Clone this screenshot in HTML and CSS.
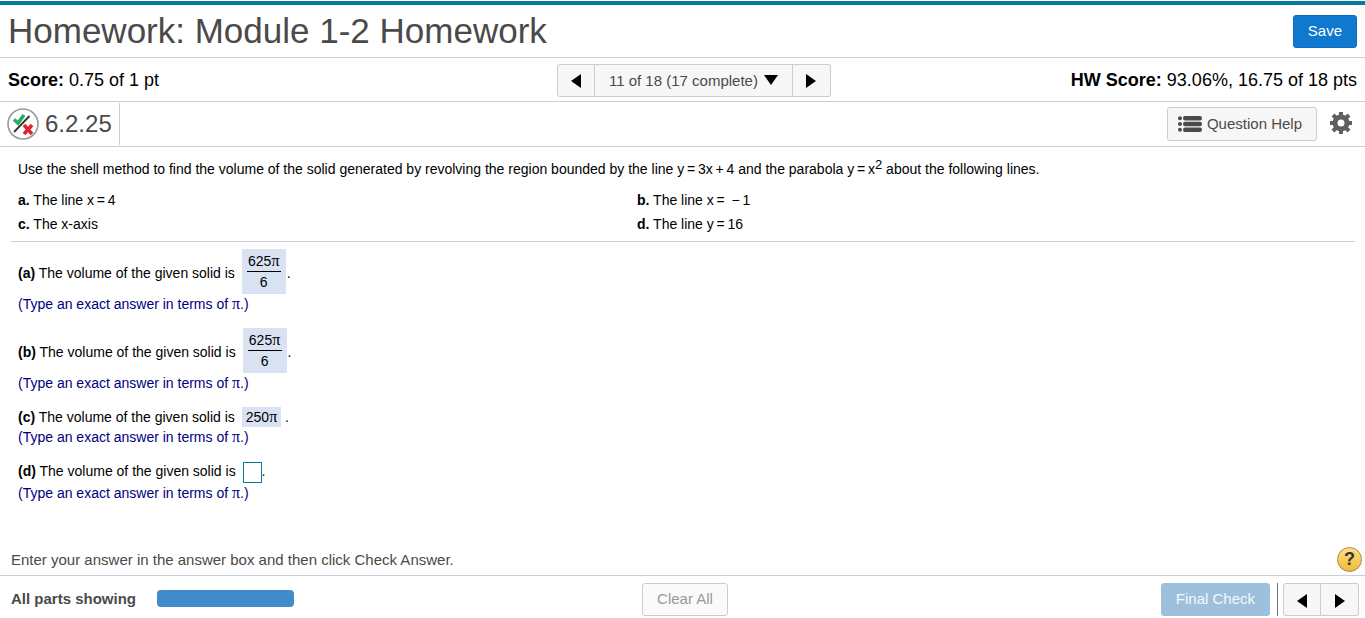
FILE: index.html
```html
<!DOCTYPE html>
<html lang="en">
<head>
    <meta charset="UTF-8">
    <meta name="viewport" content="width=device-width, initial-scale=1.0">
    <title>Homework: Module 1-2 Homework</title>
    <link rel="stylesheet" href="styles.css">
</head>
<body>
    <header class="title-bar">
        <h1>Homework: Module 1-2 Homework</h1>
        <button class="btn btn-primary" type="button">Save</button>
    </header>

    <div class="score-bar">
        <div><b>Score:</b> 0.75 of 1 pt</div>
        <div class="btn-group">
            <button class="btn arrow" type="button" aria-label="Previous question">
                <svg width="10" height="14" viewBox="0 0 10 14"><path d="M10 0v14L0 7z"/></svg>
            </button>
            <button class="btn picker" type="button">11 of 18 (17 complete)
                <svg width="14" height="10" viewBox="0 0 14 10"><path d="M0 0h14L7 10z"/></svg>
            </button>
            <button class="btn arrow" type="button" aria-label="Next question">
                <svg width="10" height="14" viewBox="0 0 10 14"><path d="M0 0v14l10-7z"/></svg>
            </button>
        </div>
        <div class="hw-score"><b>HW Score:</b> 93.06%, 16.75 of 18 pts</div>
    </div>

    <div class="question-bar">
        <div class="question-id">
            <svg width="32" height="32" viewBox="0 0 32 32" fill="none">
                <circle cx="16" cy="16" r="15" fill="#fff" stroke="#999" stroke-width="1.6"/>
                <path d="M7 11.5l4 3.500L17 7" stroke="#27ae5f" stroke-width="3.6"/>
                <path d="M7 24L22.500 8" stroke="#333" stroke-width="1.8"/>
                <path d="M17 17l8 9M25 17l-8 9" stroke="#e0242b" stroke-width="3.6"/>
            </svg>
            <h2>6.2.25</h2>
        </div>
        <div class="tools">
            <button class="btn help-btn" type="button">
                <svg width="24" height="16" viewBox="0 0 24 16" fill="#4a4a4a">
                    <path d="M7 0h15q2 0 2 2.2t-2 2.2H7q-2 0-2-2.2T7 0zM7 5.8h15q2 0 2 2.2t-2 2.2H7q-2 0-2-2.2t2-2.2zM7 11.6h15q2 0 2 2.2t-2 2.2H7q-2 0-2-2.2t2-2.2z"/>
                    <circle cx="2" cy="2.2" r="2"/><circle cx="2" cy="8" r="2"/><circle cx="2" cy="13.8" r="2"/>
                </svg>
                Question Help
            </button>
            <button class="gear" type="button" aria-label="Settings">
                <svg width="22" height="22" viewBox="-11 -11 22 22">
                    <circle r="6" fill="none" stroke="#5f5f5f" stroke-width="5"/>
                    <path d="M0-7v-4M0 7v4M-7 0h-4M7 0h4M5-5l3-3M-5-5l-3-3M5 5l3 3M-5 5l-3 3" stroke="#5f5f5f" stroke-width="4"/>
                </svg>
            </button>
        </div>
    </div>

    <main>
        <section class="problem">
            <p>Use the shell method to find the volume of the solid generated by revolving the region bounded by the line y&thinsp;=&thinsp;3x&thinsp;+&thinsp;4 and the parabola y&thinsp;=&thinsp;x<sup>2</sup> about the following lines.</p>
            <div class="lines">
                <div><b>a.</b> The line x&thinsp;=&thinsp;4</div>
                <div><b>b.</b> The line x&thinsp;=&thinsp; &minus;&thinsp;1</div>
                <div><b>c.</b> The x-axis</div>
                <div><b>d.</b> The line y&thinsp;=&thinsp;16</div>
            </div>
        </section>

        <section class="parts">
            <div class="part">
                <div><b>(a)</b> The volume of the given solid is
                    <span class="answer fraction"><span>625<i>π</i></span><span>6</span></span>.</div>
                <p class="hint">(Type an exact answer in terms of <i>π</i>.)</p>
            </div>
            <div class="part">
                <div><b>(b)</b> The volume of the given solid is
                    <span class="answer fraction"><span>625<i>π</i></span><span>6</span></span>.</div>
                <p class="hint">(Type an exact answer in terms of <i>π</i>.)</p>
            </div>
            <div class="part">
                <div><b>(c)</b> The volume of the given solid is
                    <span class="answer">250<i>π</i></span> .</div>
                <p class="hint">(Type an exact answer in terms of <i>π</i>.)</p>
            </div>
            <div class="part">
                <div><label for="answer-d"><b>(d)</b> The volume of the given solid is</label>
                    <input id="answer-d" type="text">.</div>
                <p class="hint">(Type an exact answer in terms of <i>π</i>.)</p>
            </div>
        </section>
    </main>

    <div class="instruction">
        <p>Enter your answer in the answer box and then click Check Answer.</p>
        <button class="help-icon" type="button" aria-label="Help">?</button>
    </div>

    <footer>
        <div class="progress-wrap">
            <b id="parts-label">All parts showing</b>
            <div class="progress" role="progressbar" aria-labelledby="parts-label"></div>
        </div>
        <button class="btn" type="button" disabled>Clear All</button>
        <div class="footer-actions">
            <button class="btn btn-check" type="button" disabled>Final Check</button>
            <div class="btn-group">
                <button class="btn arrow" type="button" aria-label="Previous">
                    <svg width="10" height="14" viewBox="0 0 10 14"><path d="M10 0v14L0 7z"/></svg>
                </button>
                <button class="btn arrow" type="button" aria-label="Next">
                    <svg width="10" height="14" viewBox="0 0 10 14"><path d="M0 0v14l10-7z"/></svg>
                </button>
            </div>
        </div>
    </footer>
</body>
</html>
```
FILE: styles.css
```css
* {
    box-sizing: border-box;
}

body {
    display: flex;
    flex-direction: column;
    min-height: 100vh;
    margin: 0;
    padding-top: 1px;
    background: #fff;
    color: #000;
    font-family: "Liberation Sans", Arial, sans-serif;
    font-size: 14px;
}

h1, h2, p {
    margin: 0;
    font-weight: normal;
}

.title-bar {
    display: flex;
    justify-content: space-between;
    align-items: center;
    height: 57px;
    padding: 0 8px;
    border-top: 4px solid #047a9c;
    border-bottom: 1px solid #c8cedb;
}

h1 {
    color: #4a4a4a;
    font-size: 35px;
    line-height: 44px;
}

.btn {
    height: 33px;
    padding: 0 14px 2px;
    border: 1px solid #ccc;
    border-radius: 3px;
    background: #f7f7f7;
    color: #4a4a4a;
    font-family: inherit;
    font-size: 15px;
}

.btn:disabled {
    background: #fafafa;
    color: #999;
}

.btn-primary {
    border-color: #0d6abf;
    background: #0f79d0;
    color: #fff;
}

.score-bar {
    display: grid;
    grid-template-columns: 24fr auto 23fr;
    align-items: center;
    height: 44px;
    padding: 1px 8px 0;
    border-bottom: 1px solid #c8cedb;
    font-size: 18px;
}

.hw-score {
    text-align: right;
}

.btn-group {
    display: flex;
}

.btn-group .btn {
    border-radius: 0;
}

.btn-group .btn + .btn {
    border-left: 0;
}

.btn-group .btn:first-child {
    border-radius: 3px 0 0 3px;
}

.btn-group .btn:last-child {
    border-radius: 0 3px 3px 0;
}

.arrow {
    display: flex;
    justify-content: center;
    align-items: center;
    width: 38px;
    padding: 2px 0 0;
}

.picker {
    display: flex;
    align-items: center;
    gap: 6px;
    padding-bottom: 0;
}

.question-bar {
    display: flex;
    justify-content: space-between;
    height: 45px;
    border-bottom: 1px solid #c8cedb;
}

.question-id {
    display: flex;
    align-items: center;
    gap: 6px;
    margin: 1px 0;
    padding: 0 7px 1px;
    border-right: 1px solid #c8cedb;
}

h2 {
    color: #4a4a4a;
    font-size: 24px;
}

.tools {
    display: flex;
    align-items: center;
    gap: 13px;
    padding-right: 13px;
}

.help-btn {
    display: flex;
    align-items: center;
    gap: 5px;
    height: 34px;
    padding: 0 14px 1px 10px;
}

.gear {
    display: flex;
    padding: 0 0 2px;
    border: 0;
    background: none;
}

main {
    flex: 1;
    padding: 0 10px 0 11px;
}

.problem {
    padding: 12px 7px 7px;
    border-bottom: 1px solid #c8cedb;
    line-height: 20px;
}

sup {
    font-size: 13px;
    line-height: 0;
    vertical-align: 5px;
}

.lines {
    display: grid;
    grid-template-columns: 619px 1fr;
    row-gap: 4px;
    padding-top: 11px;
}

.parts {
    padding: 7px 7px 0;
}

.part {
    margin-bottom: 14px;
    line-height: 20px;
}

i {
    font-family: "Liberation Serif", "Times New Roman", serif;
    font-size: 16px;
    font-style: normal;
    line-height: 0;
}

.hint {
    color: #000080;
}

.answer {
    display: inline-block;
    margin-left: 3px;
    padding: 0 4px;
    background: #d9e2f2;
}

.fraction {
    display: inline-flex;
    flex-direction: column;
    margin-right: 1px;
    padding: 2px 5px;
    text-align: center;
    vertical-align: 12px;
}

.fraction span {
    min-width: 34px;
}

.fraction span:first-child {
    border-bottom: 1px solid #000;
}

#answer-d {
    width: 19px;
    height: 21px;
    margin: 0 0 0 3px;
    padding: 0;
    border: 1px solid #047a9c;
    font-family: inherit;
    font-size: 14px;
    text-align: center;
    vertical-align: middle;
}

.instruction {
    display: flex;
    justify-content: space-between;
    align-items: center;
    height: 32px;
    padding: 0 3px 0 11px;
    border-bottom: 1px solid #c8cedb;
    color: #4a4a4a;
    font-size: 15px;
}

.help-icon {
    width: 25px;
    height: 25px;
    padding: 0;
    border: 1px solid #a98b45;
    border-radius: 50%;
    background: linear-gradient(#ffdf83, #f2b93b);
    color: #333;
    font-family: inherit;
    font-size: 18px;
    font-weight: bold;
}

footer {
    display: grid;
    grid-template-columns: 1fr auto 1fr;
    align-items: center;
    height: 42px;
    padding: 5px 6px 0 11px;
    color: #4a4a4a;
    font-size: 15px;
}

.progress-wrap,
.footer-actions {
    display: flex;
    align-items: center;
}

.progress-wrap {
    gap: 21px;
    padding-bottom: 2px;
}

.progress {
    width: 137px;
    height: 17px;
    border-radius: 4px;
    background: #428bca;
}

.footer-actions {
    justify-content: flex-end;
}

.footer-actions .btn-check {
    border-color: #9dbfdb;
    background: #9dc0dc;
    color: #f4f8fb;
}

.footer-actions .btn-group {
    margin-left: 7px;
    padding-left: 5px;
    border-left: 1px solid #777;
}
```
